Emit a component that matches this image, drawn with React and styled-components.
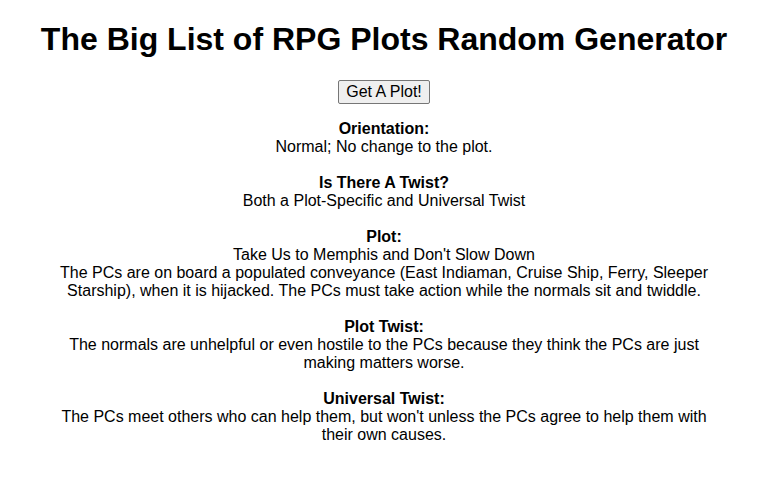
import React from "react";
import styled, { createGlobalStyle } from "styled-components";

const Global = createGlobalStyle`
  html, body { margin: 0; padding: 0; background: #fff; }
  body { font-family: "Liberation Sans", Arial, sans-serif; color: #000; }
`;

const Page = styled.div`
  display: flex;
  flex-direction: column;
  align-items: center;
  text-align: center;
`;

const Title = styled.h1`
  font-size: 32px;
  line-height: 37px;
  font-weight: bold;
  margin: 21px 0 22px;
  white-space: nowrap;
`;

const Button = styled.button`
  font-family: "Liberation Sans", Arial, sans-serif;
  font-size: 16px;
  line-height: 18px;
  padding: 2px 7px;
  border: 1px solid #767676;
  border-radius: 2px;
  background: #efefef;
  color: #000;
  margin-bottom: 16px;
`;

const Results = styled.div`
  width: 660px;
  display: flex;
  flex-direction: column;
  gap: 18px;
`;

const Section = styled.div`
  font-size: 16px;
  line-height: 18px;
`;

const Label = styled.div`
  font-weight: bold;
`;

const sections = [
  { label: "Orientation:", lines: ["Normal; No change to the plot."] },
  { label: "Is There A Twist?", lines: ["Both a Plot-Specific and Universal Twist"] },
  {
    label: "Plot:",
    lines: [
      "Take Us to Memphis and Don't Slow Down",
      "The PCs are on board a populated conveyance (East Indiaman, Cruise Ship, Ferry, Sleeper Starship), when it is hijacked. The PCs must take action while the normals sit and twiddle.",
    ],
  },
  {
    label: "Plot Twist:",
    lines: ["The normals are unhelpful or even hostile to the PCs because they think the PCs are just making matters worse."],
  },
  {
    label: "Universal Twist:",
    lines: ["The PCs meet others who can help them, but won't unless the PCs agree to help them with their own causes."],
  },
];

export default function App() {
  return (
    <>
      <Global />
      <Page>
        <Title>The Big List of RPG Plots Random Generator</Title>
        <Button>Get A Plot!</Button>
        <Results>
          {sections.map((s) => (
            <Section key={s.label}>
              <Label>{s.label}</Label>
              {s.lines.map((l, i) => (
                <div key={i}>{l}</div>
              ))}
            </Section>
          ))}
        </Results>
      </Page>
    </>
  );
}
